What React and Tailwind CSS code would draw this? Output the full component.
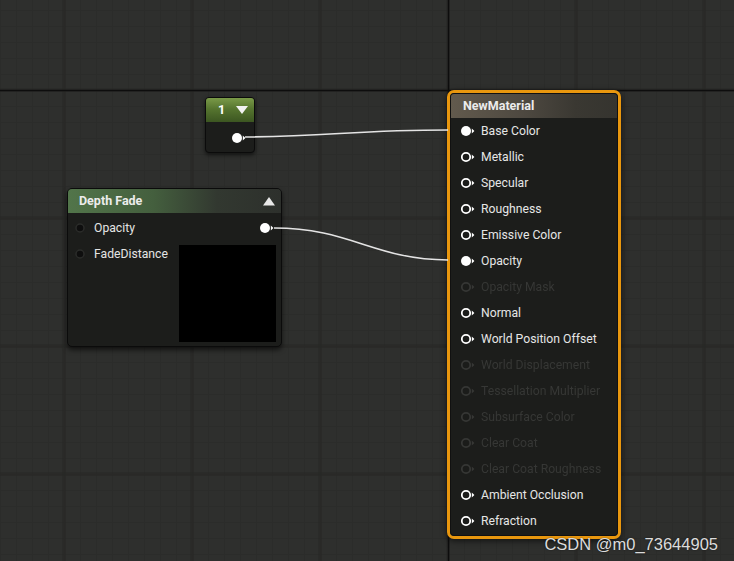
import React from "react";

// ── Material graph: three nodes on a grid canvas ──────────────────────────────
const FONT = "font-['Roboto','Liberation_Sans',sans-serif]";

const MATERIAL_PINS = [
  { label: "Base Color", on: true, linked: true },
  { label: "Metallic", on: true },
  { label: "Specular", on: true },
  { label: "Roughness", on: true },
  { label: "Emissive Color", on: true },
  { label: "Opacity", on: true, linked: true },
  { label: "Opacity Mask", on: false },
  { label: "Normal", on: true },
  { label: "World Position Offset", on: true },
  { label: "World Displacement", on: false },
  { label: "Tessellation Multiplier", on: false },
  { label: "Subsurface Color", on: false },
  { label: "Clear Coat", on: false },
  { label: "Clear Coat Roughness", on: false },
  { label: "Ambient Occlusion", on: true },
  { label: "Refraction", on: true },
];

function Pin({ filled, dim }) {
  const c = dim ? "#363735" : "#ffffff";
  return (
    <svg width="14" height="12" viewBox="0 0 14 12" className="shrink-0">
      <circle cx="5" cy="6" r={filled ? 5 : 4.2} fill={filled ? c : "#1b1c1a"} stroke={c} strokeWidth={filled ? 0 : 1.8} />
      <polygon points="10.8,3.6 13.4,6 10.8,8.4" fill={c} />
    </svg>
  );
}

function DarkPin() {
  return (
    <svg width="12" height="12" viewBox="0 0 12 12" className="shrink-0">
      <circle cx="6" cy="6" r="4" fill="#0e0e0e" stroke="#2b2c2a" strokeWidth="1.5" />
    </svg>
  );
}

function Grid() {
  return (
    <svg width="734" height="561" className="absolute inset-0">
      <defs>
        <pattern id="minor" x="0" y="10" width="16" height="16" patternUnits="userSpaceOnUse">
          <path d="M0 0.5H16M0.5 0V16" stroke="#2b2c2a" strokeWidth="1" fill="none" />
        </pattern>
        <pattern id="major" x="62" y="88" width="128" height="128" patternUnits="userSpaceOnUse">
          <path d="M0 1H128M1 0V128M0 3H128M3 0V128" stroke="#252624" strokeWidth="1" fill="none" />
        </pattern>
      </defs>
      <rect width="734" height="561" fill="#2e2f2d" />
      <rect width="734" height="561" fill="url(#minor)" />
      <rect width="734" height="561" fill="url(#major)" />
      <path d="M0 90.5H734M448.5 0V561" stroke="#0d0d0d" strokeWidth="1.5" />
    </svg>
  );
}

function Wires() {
  return (
    <svg width="734" height="561" className="absolute inset-0 pointer-events-none">
      <path d="M245 137 C 330 136, 360 130, 448 130" stroke="#e4e4e4" strokeWidth="1.6" fill="none" />
      <path d="M274 228 C 350 228, 375 260, 448 260" stroke="#e4e4e4" strokeWidth="1.6" fill="none" />
    </svg>
  );
}

function ConstantNode() {
  return (
    <div className="absolute left-[205px] top-[97px] w-[50px] h-[56px] rounded-[4px] border border-[#0b0b0b] bg-[#1c1d1b] shadow-[0_2px_4px_rgba(0,0,0,0.6)] overflow-hidden">
      <div className="h-[24px] flex items-center justify-between pl-[12px] pr-[6px] bg-[linear-gradient(180deg,#7a9a48_0%,#56752f_45%,#3c5621_100%)]">
        <span className="text-white text-[12.5px] font-bold">1</span>
        <svg width="12" height="9" viewBox="0 0 12 9">
          <polygon points="0,0 12,0 6,8" fill="#f2f2f2" />
        </svg>
      </div>
      <div className="h-[32px] flex items-center pl-[26px]">
        <Pin filled />
      </div>
    </div>
  );
}

function DepthFadeNode() {
  return (
    <div className="absolute left-[67px] top-[188px] w-[215px] h-[159px] rounded-[5px] border border-[#0b0b0b] bg-[#1c1d1b] shadow-[0_3px_5px_rgba(0,0,0,0.6)] overflow-hidden">
      <div className="h-[24px] flex items-center justify-between pl-[11px] pr-[6px] bg-[linear-gradient(90deg,#52754a_0%,#445f3e_40%,#323830_70%,#2d302c_100%)]">
        <span className="text-[#ececec] text-[12.5px] font-bold">Depth Fade</span>
        <svg width="12" height="9" viewBox="0 0 12 9">
          <polygon points="0,8.5 12,8.5 6,0" fill="#e8e8e8" />
        </svg>
      </div>
      <div className="flex pt-[2px]">
        <div className="w-[111px]">
          <div className="h-[26px] flex items-center gap-[8px] pl-[6px]">
            <DarkPin />
            <span className="text-[#e4e4e4] text-[12.2px]">Opacity</span>
          </div>
          <div className="h-[26px] flex items-center gap-[8px] pl-[6px]">
            <DarkPin />
            <span className="text-[#e4e4e4] text-[12.2px]">FadeDistance</span>
          </div>
        </div>
        <div className="flex-1 flex flex-col items-end pr-[5px]">
          <div className="h-[26px] flex items-center pr-[2px]">
            <Pin filled />
          </div>
          <div className="mt-[4px] w-[97px] h-[97px] bg-black" />
        </div>
      </div>
    </div>
  );
}

function MaterialNode() {
  return (
    <div className="absolute left-[447px] top-[90px] w-[174px] h-[449px] rounded-[7px] border-[3px] border-[#e9970e] shadow-[0_2px_6px_rgba(0,0,0,0.6)]">
      <div className="h-full rounded-[4px] border border-[#111] bg-[#1c1d1b] overflow-hidden">
        <div className="h-[24px] flex items-center pl-[12px] bg-[linear-gradient(90deg,#625a4d_0%,#4d4840_45%,#3a3832_75%,#35342f_100%)]">
          <span className="text-[#ececec] text-[12.5px] font-bold">NewMaterial</span>
        </div>
        <div className="flex flex-col">
          {MATERIAL_PINS.map((p) => (
            <div key={p.label} className="h-[26px] flex items-center gap-[6px] pl-[10px]">
              <Pin filled={p.linked} dim={!p.on} />
              <span className={p.on ? "text-[#e6e6e6] text-[12.2px]" : "text-[#363735] text-[12.2px] blur-[0.7px]"}>
                {p.label}
              </span>
            </div>
          ))}
        </div>
      </div>
    </div>
  );
}

export default function App() {
  return (
    <div className={`relative w-[734px] h-[561px] overflow-hidden bg-[#2e2f2d] ${FONT}`}>
      <Grid />
      <ConstantNode />
      <DepthFadeNode />
      <MaterialNode />
      <Wires />
      <div className="absolute right-[16px] top-[532px] text-[16.5px] text-[#dcdcdc] font-['Liberation_Sans',sans-serif] [text-shadow:0_0_2px_rgba(0,0,0,0.5)]">
        CSDN @m0_73644905
      </div>
    </div>
  );
}
